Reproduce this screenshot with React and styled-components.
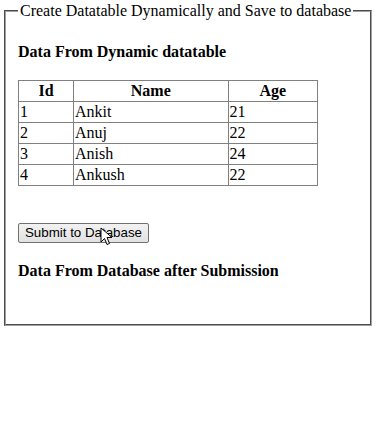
import React from "react";
import styled, { createGlobalStyle } from "styled-components";

const Global = createGlobalStyle`
  html, body { margin: 0; padding: 0; background: #ffffff; }
  body { font-family: "Liberation Serif", "Times New Roman", serif; font-size: 16px; color: #000; }
`;

const Frame = styled.fieldset`
  box-sizing: border-box;
  width: 368px;
  margin: 2px 0 0 4px;
  padding: 0 12px 44px 12px;
  border: 2px groove #a0a0a0;
  display: flex;
  flex-direction: column;
  align-items: flex-start;
`;

const Legend = styled.legend`
  padding: 0 2px;
  font-size: 16px;
  line-height: 18px;
`;

const Heading = styled.h4`
  margin: ${(p) => p.$top}px 0 0 0;
  font-size: 16px;
  line-height: 18px;
  font-weight: bold;
`;

const Table = styled.table`
  margin-top: 19px;
  border-collapse: collapse;
  width: 300px;
  font-size: 16px;
`;

const Th = styled.th`
  border: 1px solid #808080;
  padding: 1px;
  height: 18px;
  line-height: 18px;
  text-align: center;
  font-weight: bold;
  width: ${(p) => p.$w}px;
`;

const Td = styled.td`
  border: 1px solid #808080;
  padding: 1px;
  height: 18px;
  line-height: 18px;
  text-align: left;
`;

const ButtonWrap = styled.div`
  position: relative;
  margin-top: 37px;
`;

const Button = styled.button`
  display: block;
  box-sizing: border-box;
  width: 131px;
  height: 20px;
  padding: 0 2px;
  white-space: nowrap;
  font-family: "Liberation Sans", Arial, sans-serif;
  font-size: 13.33px;
  line-height: 16px;
  color: #000;
  background: linear-gradient(#f2f2f2, #e2e2e2);
  border: 1px solid #707070;
  border-radius: 2px;
`;

const Cursor = styled.svg`
  position: absolute;
  left: 82px;
  top: 4px;
  width: 14px;
  height: 20px;
`;

const rows = [
  [1, "Ankit", 21],
  [2, "Anuj", 22],
  [3, "Anish", 24],
  [4, "Ankush", 22],
];

export default function App() {
  return (
    <>
      <Global />
      <Frame>
        <Legend>Create Datatable Dynamically and Save to database</Legend>
        <Heading $top={23}>Data From Dynamic datatable</Heading>
        <Table>
          <thead>
            <tr>
              <Th $w={53}>Id</Th>
              <Th $w={154}>Name</Th>
              <Th $w={88}>Age</Th>
            </tr>
          </thead>
          <tbody>
            {rows.map((r) => (
              <tr key={r[0]}>
                <Td>{r[0]}</Td>
                <Td>{r[1]}</Td>
                <Td>{r[2]}</Td>
              </tr>
            ))}
          </tbody>
        </Table>
        <ButtonWrap>
          <Button>Submit to Database</Button>
          <Cursor viewBox="0 0 14 20">
            <path d="M1 1 L1 15 L4.5 11.5 L7 17.5 L9.5 16.5 L7 10.5 L12 10.5 Z" fill="#fff" stroke="#000" strokeWidth="1" strokeLinejoin="round" />
          </Cursor>
        </ButtonWrap>
        <Heading $top={19}>Data From Database after Submission</Heading>
      </Frame>
    </>
  );
}
